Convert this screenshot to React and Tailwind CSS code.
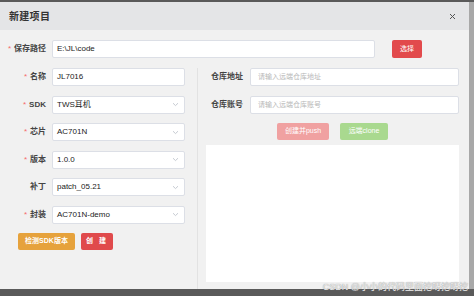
import React from "react";

const font = { fontFamily: '"Liberation Sans","Noto Sans CJK SC",sans-serif' };

function Chevron() {
  return (
    <svg width="7" height="5" viewBox="0 0 7 5" className="shrink-0">
      <path d="M1 1.2 L3.5 3.6 L6 1.2" fill="none" stroke="#c0c4cc" strokeWidth="0.9" />
    </svg>
  );
}

function Label({ req, children, w = "w-[46px]" }) {
  return (
    <div className={`${w} shrink-0 flex items-center justify-end text-[8px] font-bold text-[#444]`}>
      {req && <span className="text-[#f56c6c] mr-[3px] text-[8px] font-normal">*</span>}
      {children}
    </div>
  );
}

function Input({ value, select, w, placeholder }) {
  return (
    <div className={`${w} h-[18px] bg-white border border-[#dcdfe6] rounded-[2px] flex items-center justify-between pl-[3px] pr-[5px]`}>
      {placeholder ? (
        <span className="text-[7px] text-[#b8b8b8] pl-[4px]">{placeholder}</span>
      ) : (
        <span className="text-[8px] text-[#222] pl-[1px]">{value}</span>
      )}
      {select && <Chevron />}
    </div>
  );
}

function Row({ label, req, value, select }) {
  return (
    <div className="flex items-center h-[18px]">
      <Label req={req}>{label}</Label>
      <div className="ml-[6px]">
        <Input value={value} select={select} w="w-[133px]" />
      </div>
    </div>
  );
}

export default function App() {
  return (
    <div className="w-[474px] h-[296px] bg-[#5e5e5e] flex flex-col overflow-hidden relative" style={font}>
      <div className="h-[2px] shrink-0 bg-[#5a5a5a]" />
      <div className="flex h-[287px] shrink-0">
        <div className="w-[469px] h-full flex flex-col bg-[#f1f1f1]">
          {/* header */}
          <div className="h-[28px] shrink-0 bg-[#e4e5e7] flex items-center justify-between pl-[9px] pr-[13px]">
            <span className="text-[10px] font-bold text-[#333] tracking-[0.3px]">新建项目</span>
            <svg width="7" height="7" viewBox="0 0 7 7">
              <path d="M1 1 L6 6 M6 1 L1 6" stroke="#555" strokeWidth="1" />
            </svg>
          </div>
          {/* body */}
          <div className="flex-1 flex flex-col pt-[10px]">
            <div className="flex items-center h-[18px]">
              <Label req>保存路径</Label>
              <div className="ml-[6px]">
                <Input value="E:\JL\code" w="w-[323px]" />
              </div>
              <button className="ml-[17px] w-[30px] h-[18px] bg-[#e24a4c] rounded-[2px] text-white text-[7px] flex items-center justify-center">
                选择
              </button>
            </div>
            <div className="flex mt-[10px] flex-1">
              <div className="w-[198px] shrink-0 border-r border-[#e2e2e2] flex flex-col gap-[9.6px]">
                <Row req label="名称" value="JL7016" />
                <Row req label="SDK" value="TWS耳机" select />
                <Row req label="芯片" value="AC701N" select />
                <Row req label="版本" value="1.0.0" select />
                <Row label="补丁" value="patch_05.21" select />
                <Row req label="封装" value="AC701N-demo" select />
                <div className="flex items-center pl-[18px] gap-[6px] mt-[-1px]">
                  <button className="w-[57px] h-[17px] bg-[#e6a23c] rounded-[2px] text-white text-[7px] font-bold flex items-center justify-center">
                    检测SDK版本
                  </button>
                  <button className="w-[32px] h-[17px] bg-[#e04a4c] rounded-[2px] text-white text-[7px] font-bold flex items-center justify-center tracking-[2px]">
                    创 建
                  </button>
                </div>
              </div>
              <div className="flex-1 flex flex-col pl-[8px] pr-[10px] pb-[7px]">
                <div className="flex items-center h-[18px]">
                  <Label w="w-[37px]">仓库地址</Label>
                  <div className="ml-[7px]">
                    <Input placeholder="请输入远端仓库地址" w="w-[209px]" />
                  </div>
                </div>
                <div className="flex items-center h-[18px] mt-[10px]">
                  <Label w="w-[37px]">仓库账号</Label>
                  <div className="ml-[7px]">
                    <Input placeholder="请输入远端仓库账号" w="w-[209px]" />
                  </div>
                </div>
                <div className="flex justify-center gap-[11px] mt-[9px]">
                  <button className="w-[52px] h-[17px] bg-[#f0a1a1] rounded-[2px] text-white text-[7px] flex items-center justify-center">
                    创建并push
                  </button>
                  <button className="w-[48px] h-[17px] bg-[#a9d98f] rounded-[2px] text-white text-[7px] flex items-center justify-center">
                    远端clone
                  </button>
                </div>
                <div className="mt-[5px] flex-1 bg-white" />
              </div>
            </div>
          </div>
        </div>
        <div className="flex-1 bg-[#a8a8a8]" />
      </div>
      <div className="flex-1 bg-[#5a5a5a]" />
      <div className="absolute right-[6px] bottom-[4px] text-[9px] text-[#ececec] [text-shadow:0_0_1px_#777] leading-none">
        CSDN @小小的代码里面挖呀挖呀挖
      </div>
    </div>
  );
}
